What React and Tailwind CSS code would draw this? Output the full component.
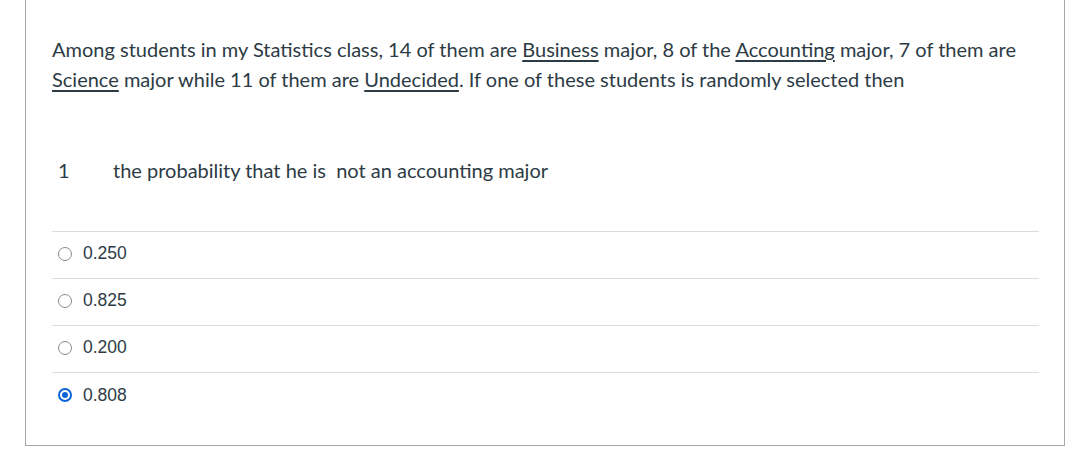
import React from "react";

const opts = [
  { v: "0.250", c: false },
  { v: "0.825", c: false },
  { v: "0.200", c: false },
  { v: "0.808", c: true },
];

function Radio({ checked }) {
  return checked ? (
    <span className="w-[14px] h-[14px] rounded-full border-[2px] border-[#0b65d8] flex items-center justify-center shrink-0">
      <span className="w-[6px] h-[6px] rounded-full bg-[#0b65d8]" />
    </span>
  ) : (
    <span className="w-[14px] h-[14px] rounded-full border-[1.5px] border-[#8a8a90] shrink-0" />
  );
}

export default function App() {
  return (
    <div className="bg-white w-[1077px] h-[475px] font-['Lato',sans-serif] text-[#2d3b45]">
      <div className="ml-[25px] w-[1040px] h-[446px] border-l border-r border-b border-[#a8a8a8] pl-[26px] pr-[25px] pt-[34px]">
        <p className="text-[20px] leading-[30px]">
          Among students in my Statistics class, 14 of them are{" "}
          <u className="underline-offset-[3px]">Business</u> major, 8 of the{" "}
          <u className="underline-offset-[3px]">Accounting</u> major, 7 of them are{" "}
          <u className="underline-offset-[3px]">Science</u> major while 11 of them are{" "}
          <u className="underline-offset-[3px]">Undecided</u>. If one of these students is randomly selected then
        </p>
        <div className="mt-[62px] flex text-[20px] leading-[28px]">
          <span className="w-[61px] pl-[6px]">1</span>
          <span>the probability that he is&nbsp; not an accounting major</span>
        </div>
        <div className="mt-[47px] border-t border-[#dcdcdc]">
          {opts.map((o, i) => (
            <div
              key={i}
              className={`h-[47px] pb-[3px] flex items-center gap-[11px] pl-[6px] font-['Liberation_Sans',Arial,sans-serif] text-[17.5px] text-[#2d3b45] ${i < 3 ? "border-b border-[#dcdcdc]" : ""}`}
            >
              <Radio checked={o.c} />
              <span>{o.v}</span>
            </div>
          ))}
        </div>
      </div>
    </div>
  );
}
